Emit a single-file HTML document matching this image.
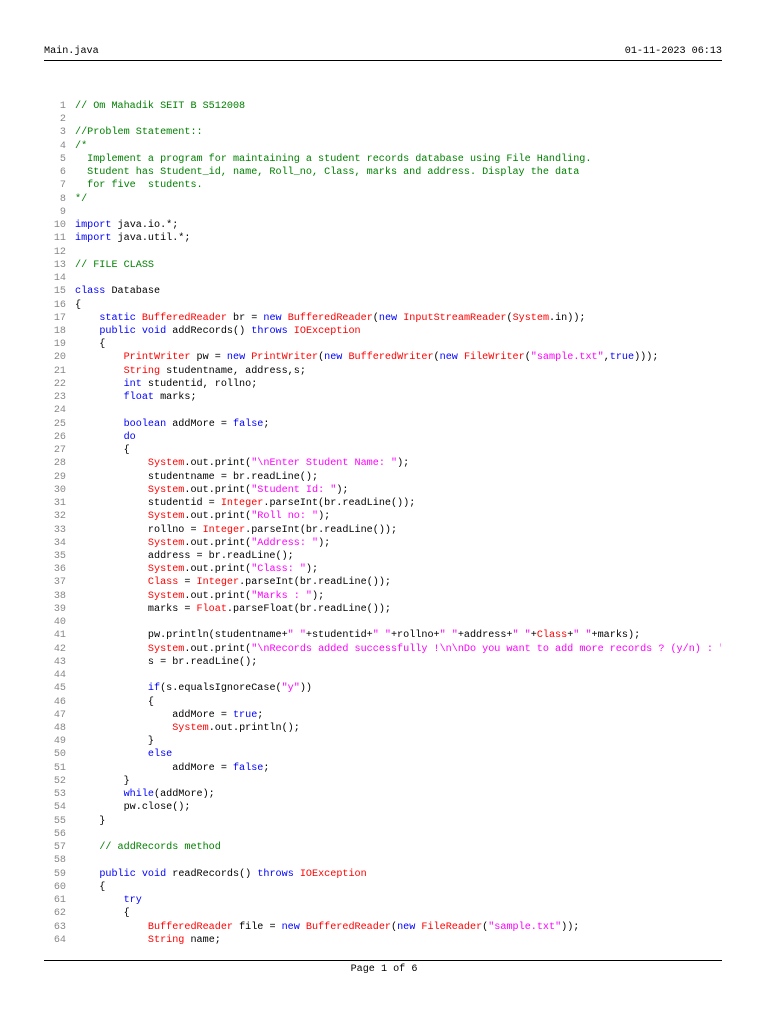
<!DOCTYPE html>
<html><head><meta charset="utf-8"><style>
html,body{margin:0;padding:0;background:#fff;width:768px;height:1024px;overflow:hidden;position:relative}
*{font-family:"Liberation Mono",monospace;font-size:10.15px}
.hdr{position:absolute;top:46px;left:44px;right:46px;color:#000}
.hdr .r{position:absolute;right:0;top:0}
.ln1{position:absolute;left:44px;width:678px;top:60px;border-top:1px solid #000}
.ln2{position:absolute;left:44px;width:678px;top:960px;border-top:1px solid #000}
.ftr{position:absolute;top:964px;left:0;width:768px;text-align:center;color:#000}
pre{margin:0;line-height:13.24px;position:absolute;top:100px;white-space:pre;color:#000}
.nums{left:40px;width:26px;text-align:right;color:#888}
.code{left:75px;width:646px;overflow:hidden}
.c{color:#008000}.k{color:#0000ff}.t{color:#ff0000}.s{color:#ff00ff}
</style></head><body>
<div class="hdr">Main.java<span class="r">01-11-2023 06:13</span></div>
<div class="ln1"></div>
<pre class="nums">1
2
3
4
5
6
7
8
9
10
11
12
13
14
15
16
17
18
19
20
21
22
23
24
25
26
27
28
29
30
31
32
33
34
35
36
37
38
39
40
41
42
43
44
45
46
47
48
49
50
51
52
53
54
55
56
57
58
59
60
61
62
63
64</pre>
<pre class="code"><span class="c">// Om Mahadik SEIT B S512008</span>

<span class="c">//Problem Statement::</span>
<span class="c">/*</span>
<span class="c">  Implement a program for maintaining a student records database using File Handling.</span>
<span class="c">  Student has Student_id, name, Roll_no, Class, marks and address. Display the data</span>
<span class="c">  for five  students.</span>
<span class="c">*/</span>

<span class="k">import</span> java.io.*;
<span class="k">import</span> java.util.*;

<span class="c">// FILE CLASS</span>

<span class="k">class</span> Database
{
    <span class="k">static</span> <span class="t">BufferedReader</span> br = <span class="k">new</span> <span class="t">BufferedReader</span>(<span class="k">new</span> <span class="t">InputStreamReader</span>(<span class="t">System</span>.in));
    <span class="k">public</span> <span class="k">void</span> addRecords() <span class="k">throws</span> <span class="t">IOException</span>
    {
        <span class="t">PrintWriter</span> pw = <span class="k">new</span> <span class="t">PrintWriter</span>(<span class="k">new</span> <span class="t">BufferedWriter</span>(<span class="k">new</span> <span class="t">FileWriter</span>(<span class="s">"sample.txt"</span>,<span class="k">true</span>)));
        <span class="t">String</span> studentname, address,s;
        <span class="k">int</span> studentid, rollno;
        <span class="k">float</span> marks;

        <span class="k">boolean</span> addMore = <span class="k">false</span>;
        <span class="k">do</span>
        {
            <span class="t">System</span>.out.print(<span class="s">"\nEnter Student Name: "</span>);
            studentname = br.readLine();
            <span class="t">System</span>.out.print(<span class="s">"Student Id: "</span>);
            studentid = <span class="t">Integer</span>.parseInt(br.readLine());
            <span class="t">System</span>.out.print(<span class="s">"Roll no: "</span>);
            rollno = <span class="t">Integer</span>.parseInt(br.readLine());
            <span class="t">System</span>.out.print(<span class="s">"Address: "</span>);
            address = br.readLine();
            <span class="t">System</span>.out.print(<span class="s">"Class: "</span>);
            <span class="t">Class</span> = <span class="t">Integer</span>.parseInt(br.readLine());
            <span class="t">System</span>.out.print(<span class="s">"Marks : "</span>);
            marks = <span class="t">Float</span>.parseFloat(br.readLine());

            pw.println(studentname+<span class="s">" "</span>+studentid+<span class="s">" "</span>+rollno+<span class="s">" "</span>+address+<span class="s">" "</span>+<span class="t">Class</span>+<span class="s">" "</span>+marks);
            <span class="t">System</span>.out.print(<span class="s">"\nRecords added successfully !\n\nDo you want to add more records ? (y/n) : "</span>);
            s = br.readLine();

            <span class="k">if</span>(s.equalsIgnoreCase(<span class="s">"y"</span>))
            {
                addMore = <span class="k">true</span>;
                <span class="t">System</span>.out.println();
            }
            <span class="k">else</span>
                addMore = <span class="k">false</span>;
        }
        <span class="k">while</span>(addMore);
        pw.close();
    }

    <span class="c">// addRecords method</span>

    <span class="k">public</span> <span class="k">void</span> readRecords() <span class="k">throws</span> <span class="t">IOException</span>
    {
        <span class="k">try</span>
        {
            <span class="t">BufferedReader</span> file = <span class="k">new</span> <span class="t">BufferedReader</span>(<span class="k">new</span> <span class="t">FileReader</span>(<span class="s">"sample.txt"</span>));
            <span class="t">String</span> name;</pre>
<div class="ln2"></div>
<div class="ftr">Page 1 of 6</div>
</body></html>
